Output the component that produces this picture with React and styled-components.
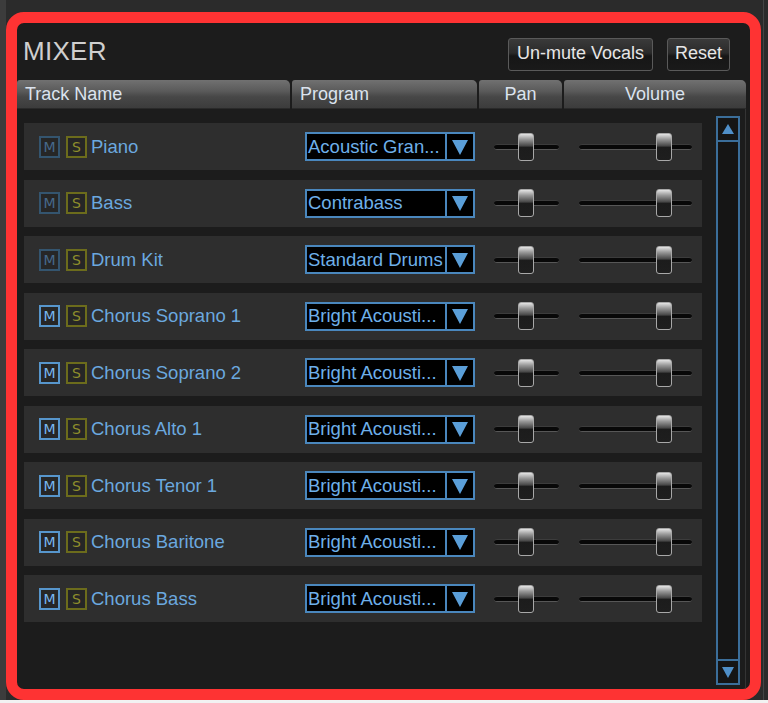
import React from "react";
import styled, { createGlobalStyle } from "styled-components";

const Global = createGlobalStyle`
  html, body { margin: 0; padding: 0; background: #2b2b2b; }
  body { font-family: "Liberation Sans", Arial, sans-serif; }
  * { box-sizing: border-box; }
`;

const Screen = styled.div`
  width: 768px;
  height: 703px;
  display: flex;
  padding: 12px 7px 3px 6px;
  background:
    linear-gradient(to bottom, transparent 700px, #f2f2f2 700px),
    linear-gradient(to right, #3c3c3c 6px, #2b2b2b 6px, #2b2b2b 763px, #444 763px, #444 764px, #2b2b2b 764px);
`;

const Frame = styled.div`
  flex: 1;
  display: flex;
  flex-direction: column;
  border: 11px solid #fe3333;
  border-radius: 18px;
  background: #1c1c1c;
  overflow: hidden;
`;

const TitleBar = styled.div`
  height: 57px;
  display: flex;
  align-items: center;
  padding: 0 20px 0 6px;
`;

const Title = styled.div`
  font-family: "Liberation Sans", Arial, sans-serif;
  font-size: 26px;
  color: #cfcfcf;
  letter-spacing: 0.3px;
  flex: 1;
  margin-top: -1px;
`;

const Button = styled.button`
  height: 33px;
  width: ${(p) => p.$w}px;
  margin-left: ${(p) => p.$ml || 0}px;
  margin-top: 6px;
  border: 1px solid #5a5a5a;
  border-radius: 3px;
  background: linear-gradient(to bottom, #3a3a3a 0%, #2a2a2a 45%, #161616 55%, #1a1a1a 100%);
  color: #e6e6e6;
  font-family: "Liberation Sans", Arial, sans-serif;
  font-size: 18px;
  padding: 0 0 2px 0;
  display: flex;
  align-items: center;
  justify-content: center;
`;

const Header = styled.div`
  height: 29px;
  margin-right: 4px;
  display: flex;
  gap: 2px;
`;

const HeaderCell = styled.div`
  width: ${(p) => p.$w}px;
  flex: ${(p) => (p.$grow ? 1 : "none")};
  display: flex;
  align-items: center;
  justify-content: ${(p) => (p.$center ? "center" : "flex-start")};
  padding-left: ${(p) => (p.$center ? 0 : 8)}px;
  background: linear-gradient(to bottom, #717171 0%, #5a5a5a 40%, #474747 60%, #3c3c3c 100%);
  border-radius: 3px 5px 0 0;
  border-bottom: 1px solid #2a2a2a;
  color: #dbe3ee;
  font-size: 18px;
`;

const Body = styled.div`
  flex: 1;
  display: flex;
  margin-right: 4px;
  border-right: 1px solid #343434;
  padding: 0 5px 4px 7px;
`;

const List = styled.div`
  width: 678px;
  padding-top: 14px;
  display: flex;
  flex-direction: column;
  gap: 9.5px;
`;

const Row = styled.div`
  height: 47px;
  display: flex;
  align-items: center;
  padding-left: 15px;
  background: #2e2e2e;
`;

const TrackCell = styled.div`
  width: 266px;
  display: flex;
  align-items: center;
`;

const ToggleBox = styled.div`
  width: 21px;
  height: 22px;
  margin-right: ${(p) => p.$mr}px;
  display: flex;
  align-items: center;
  justify-content: center;
  font-family: "DejaVu Sans", sans-serif;
  font-size: 14px;
  border: 2px solid ${(p) => p.$border};
  color: ${(p) => p.$color};
  background: #262626;
`;

const TrackName = styled.div`
  font-size: 18.5px;
  color: #6ba8df;
  white-space: nowrap;
`;

const Dropdown = styled.div`
  width: 170px;
  height: 29px;
  display: flex;
  background: #000;
  border: 2px solid #4a87bd;
`;

const DropText = styled.div`
  flex: 1;
  display: flex;
  align-items: center;
  padding-left: 1px;
  font-size: 18.5px;
  color: #6eb0ea;
  white-space: nowrap;
  overflow: hidden;
`;

const DropArrow = styled.div`
  width: 28px;
  border-left: 2px solid #4a87bd;
  display: flex;
  align-items: center;
  justify-content: center;
`;

const SliderWrap = styled.div`
  position: relative;
  width: ${(p) => p.$w}px;
  margin-left: ${(p) => p.$ml}px;
  height: 28px;
  display: flex;
  align-items: center;
`;

const Track = styled.div`
  width: 100%;
  height: 6px;
  border-radius: 3px;
  background: #080808;
  border-top: 1px solid #3c3c3c;
  border-bottom: 1px solid #575757;
`;

const Thumb = styled.div`
  position: absolute;
  top: 0;
  width: 16px;
  height: 28px;
  border: 1px solid #a8a8a8;
  border-radius: 3px;
  background: linear-gradient(to bottom, #e4e4e4 0%, #9a9a9a 20%, #4a4a4a 45%, #1c1c1c 52%, #1e1e1e 100%);
`;

const Scrollbar = styled.div`
  width: 24px;
  margin: 7px 0 0 14px;
  border: 2px solid #3b6e9a;
  display: flex;
  flex-direction: column;
  justify-content: space-between;
  background: #151515;
`;

const ScrollBtn = styled.div`
  height: ${(p) => p.$h}px;
  display: flex;
  align-items: center;
  justify-content: center;
  ${(p) => (p.$top ? "border-bottom" : "border-top")}: 2px solid #3b6e9a;
`;

const tracks = [
  { name: "Piano", program: "Acoustic Gran...", muteOn: false },
  { name: "Bass", program: "Contrabass", muteOn: false },
  { name: "Drum Kit", program: "Standard Drums", muteOn: false },
  { name: "Chorus Soprano 1", program: "Bright Acousti...", muteOn: true },
  { name: "Chorus Soprano 2", program: "Bright Acousti...", muteOn: true },
  { name: "Chorus Alto 1", program: "Bright Acousti...", muteOn: true },
  { name: "Chorus Tenor 1", program: "Bright Acousti...", muteOn: true },
  { name: "Chorus Baritone", program: "Bright Acousti...", muteOn: true },
  { name: "Chorus Bass", program: "Bright Acousti...", muteOn: true },
];

const Slider = ({ w, ml, pos }) => (
  <SliderWrap $w={w} $ml={ml}>
    <Track />
    <Thumb style={{ left: pos }} />
  </SliderWrap>
);

export default function App() {
  return (
    <>
      <Global />
      <Screen>
        <Frame>
          <TitleBar>
            <Title>MIXER</Title>
            <Button $w={145}>Un-mute Vocals</Button>
            <Button $w={63} $ml={14}>Reset</Button>
          </TitleBar>
          <Header>
            <HeaderCell $w={273}>Track Name</HeaderCell>
            <HeaderCell $w={185}>Program</HeaderCell>
            <HeaderCell $w={83} $center>Pan</HeaderCell>
            <HeaderCell $grow $center>Volume</HeaderCell>
          </Header>
          <Body>
            <List>
              {tracks.map((t) => (
                <Row key={t.name}>
                  <TrackCell>
                    <ToggleBox
                      $mr={6}
                      $border={t.muteOn ? "#5796cc" : "#34556f"}
                      $color={t.muteOn ? "#78b6ec" : "#47698a"}
                    >
                      M
                    </ToggleBox>
                    <ToggleBox $mr={4} $border="#6c6c1c" $color="#8e8e2c">
                      S
                    </ToggleBox>
                    <TrackName>{t.name}</TrackName>
                  </TrackCell>
                  <Dropdown>
                    <DropText>{t.program}</DropText>
                    <DropArrow>
                      <svg width="16" height="16" viewBox="0 0 16 16">
                        <polygon points="0,1 16,1 8,16" fill="#5a9ed8" />
                      </svg>
                    </DropArrow>
                  </Dropdown>
                  <Slider w={65} ml={19} pos={24} />
                  <Slider w={113} ml={20} pos={77} />
                </Row>
              ))}
            </List>
            <Scrollbar>
              <ScrollBtn $h={24} $top>
                <svg width="12" height="10" viewBox="0 0 12 10">
                  <polygon points="6,0 12,10 0,10" fill="#4f8fc8" />
                </svg>
              </ScrollBtn>
              <ScrollBtn $h={24}>
                <svg width="12" height="11" viewBox="0 0 12 11">
                  <polygon points="0,0 12,0 6,11" fill="#4f8fc8" />
                </svg>
              </ScrollBtn>
            </Scrollbar>
          </Body>
        </Frame>
      </Screen>
    </>
  );
}
